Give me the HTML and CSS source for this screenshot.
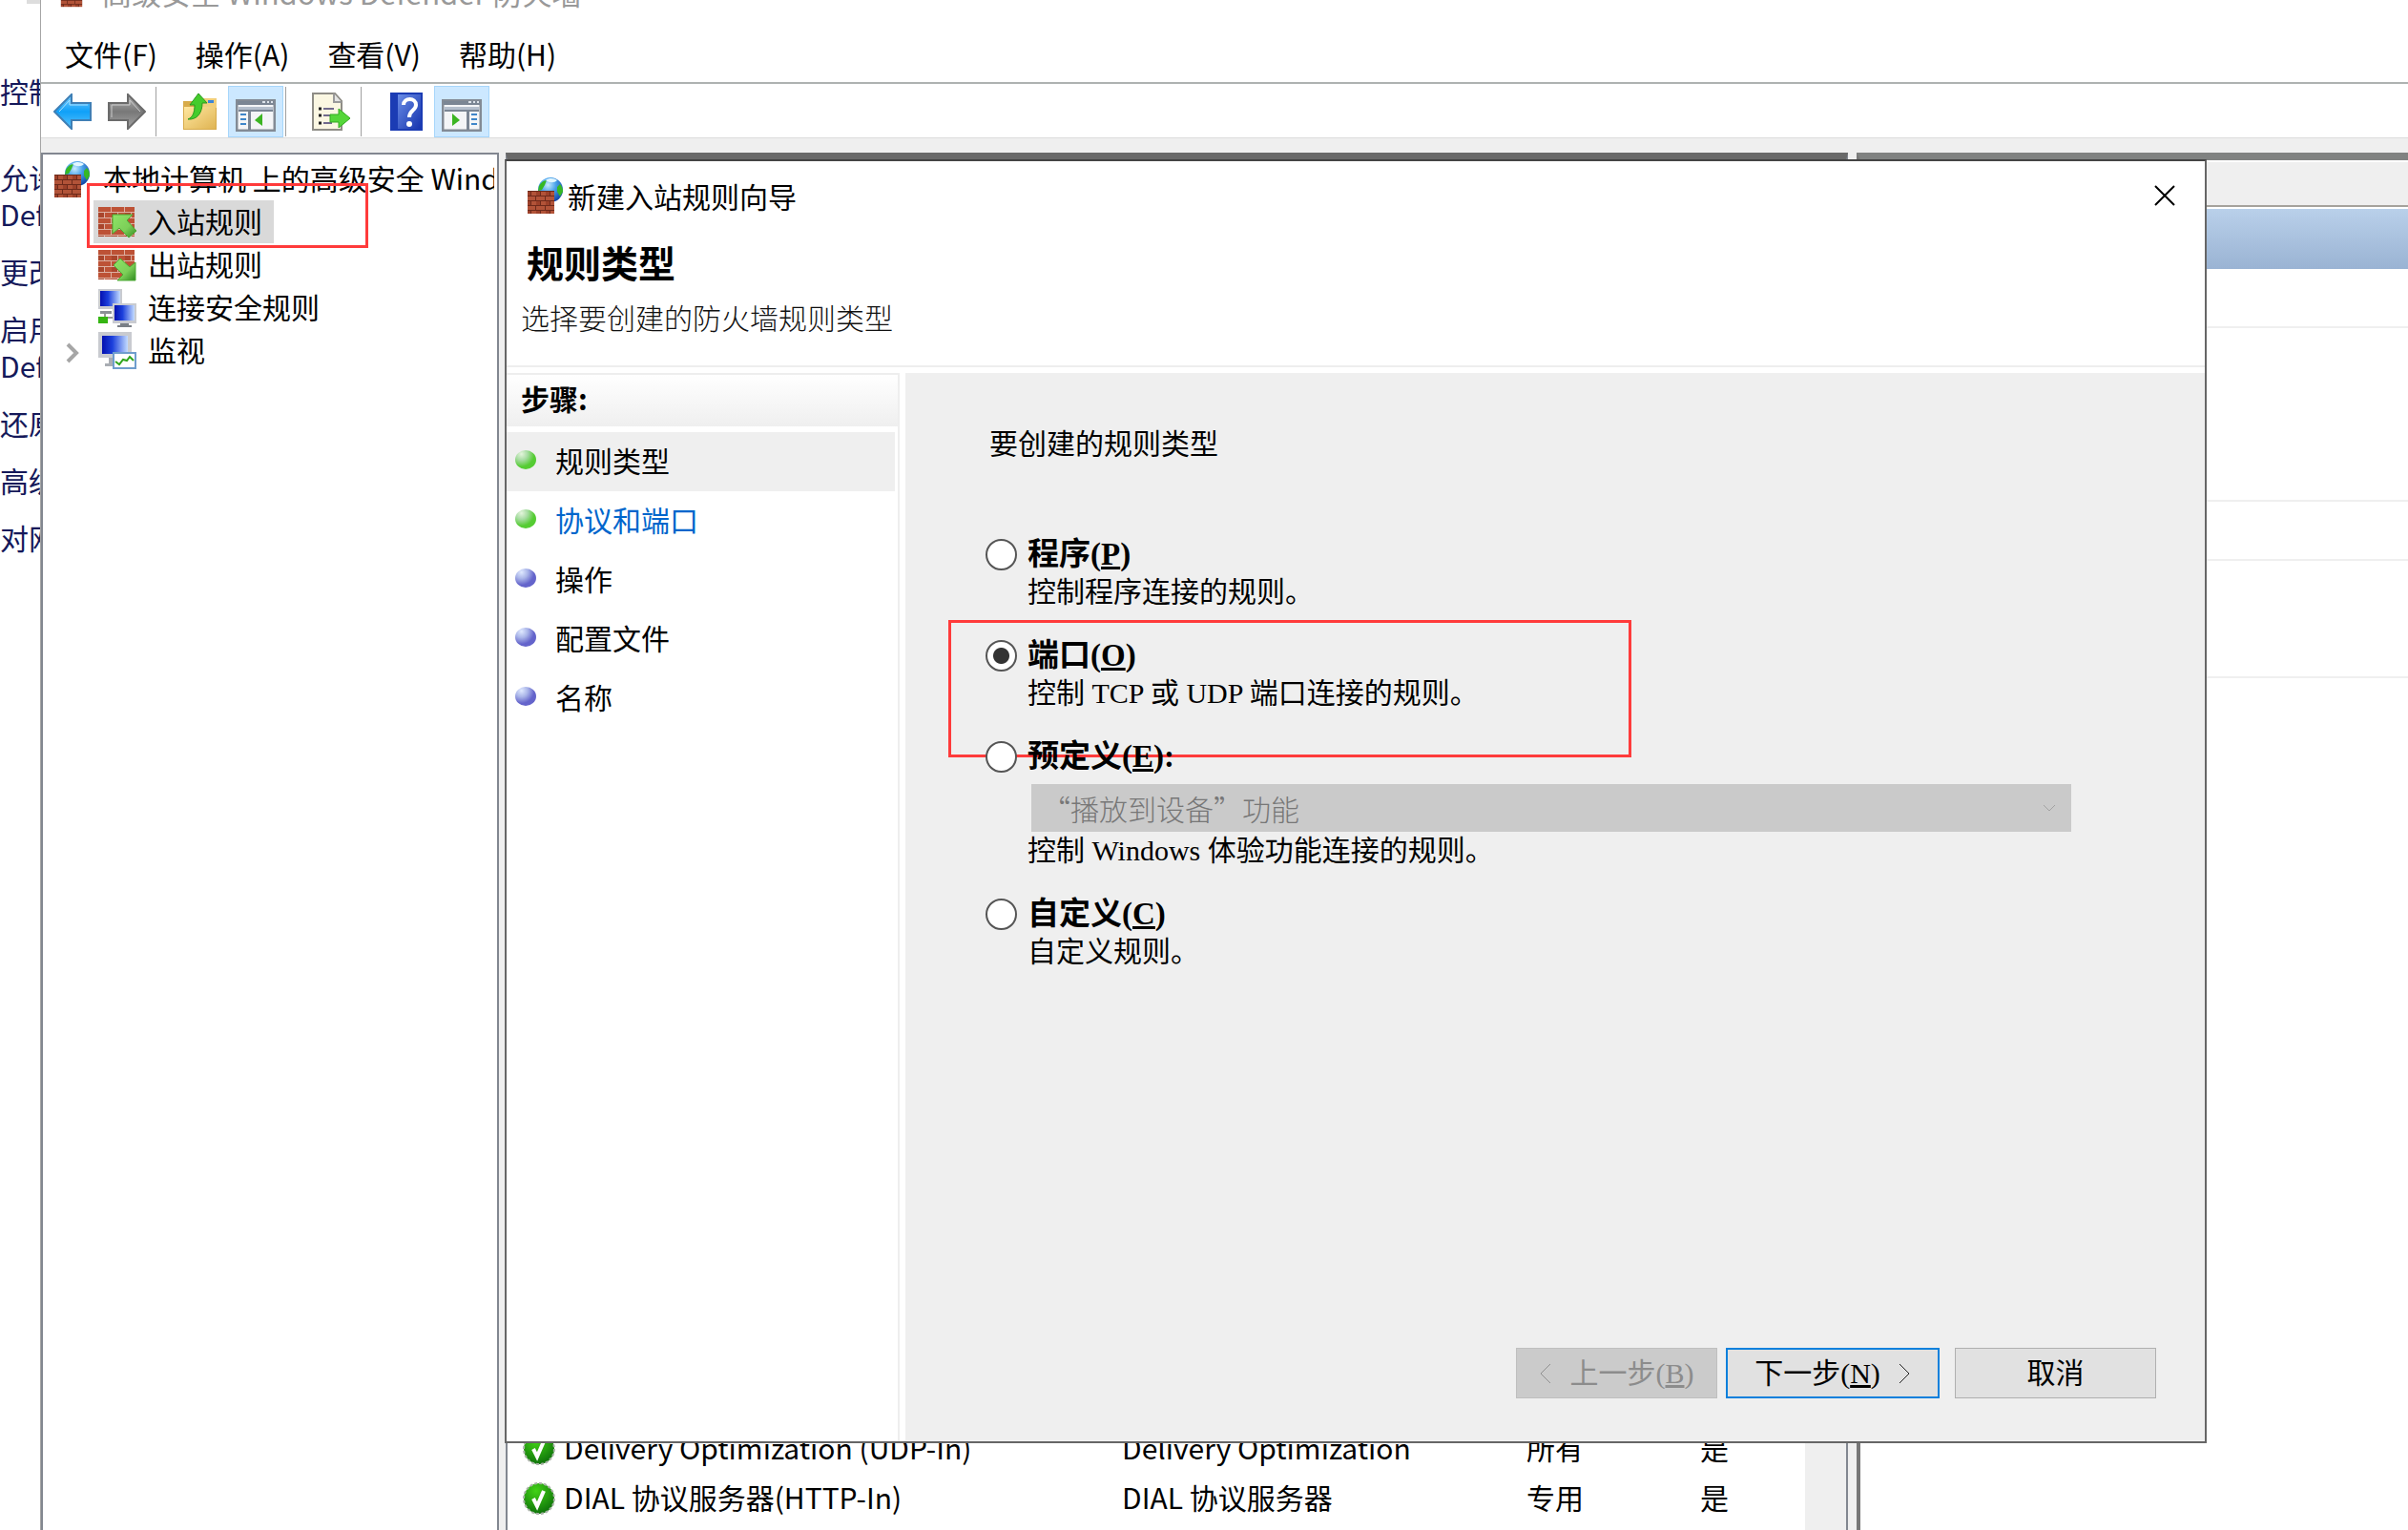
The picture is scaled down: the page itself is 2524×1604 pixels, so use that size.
FILE: index.html
```html
<!DOCTYPE html>
<html lang="zh-CN">
<head>
<meta charset="UTF-8">
<meta name="viewport" content="width=device-width, initial-scale=1.0">
<title>高级安全 Windows Defender 防火墙</title>
<link rel="stylesheet" href="styles.css">
</head>
<body>

<!-- 公用图标 -->
<svg class="defs" width="0" height="0">
  <defs>
    <linearGradient id="blueArrow" x1="0" y1="0" x2="0" y2="1">
      <stop offset="0" stop-color="#7fd0ff"/><stop offset=".5" stop-color="#0fa0f8"/><stop offset="1" stop-color="#5cc4fb"/>
    </linearGradient>
    <linearGradient id="grayArrow" x1="0" y1="0" x2="0" y2="1">
      <stop offset="0" stop-color="#b5b5b5"/><stop offset=".5" stop-color="#787878"/><stop offset="1" stop-color="#a5a5a5"/>
    </linearGradient>
    <linearGradient id="green" x1="0" y1="0" x2="1" y2="1">
      <stop offset="0" stop-color="#8fe468"/><stop offset=".6" stop-color="#7ccf58"/><stop offset="1" stop-color="#2f8a20"/>
    </linearGradient>
    <linearGradient id="screen" x1="0" y1="0" x2="1" y2="0">
      <stop offset="0" stop-color="#0410b0"/><stop offset=".4" stop-color="#1c40dc"/><stop offset="1" stop-color="#c4dcff"/>
    </linearGradient>
    <linearGradient id="folder" x1="0" y1="0" x2="1" y2="1">
      <stop offset="0" stop-color="#ffe7a0"/><stop offset="1" stop-color="#dfb453"/>
    </linearGradient>
    <linearGradient id="help" x1="0" y1="0" x2="1" y2="1">
      <stop offset="0" stop-color="#6a8de6"/><stop offset="1" stop-color="#1634ae"/>
    </linearGradient>
    <radialGradient id="globe" cx=".4" cy=".3" r=".7">
      <stop offset="0" stop-color="#c9ecff"/><stop offset=".45" stop-color="#4aa3ea"/><stop offset="1" stop-color="#1248a8"/>
    </radialGradient>
    <radialGradient id="ok" cx=".4" cy=".25" r=".8">
      <stop offset="0" stop-color="#42d316"/><stop offset="1" stop-color="#0b6d09"/>
    </radialGradient>
    <pattern id="brick" width="14" height="12" patternUnits="userSpaceOnUse">
      <rect width="14" height="12" fill="#dcb0a2"/>
      <rect x="0" y="1" width="13" height="5" fill="#bd5236"/>
      <rect x="0" y="7" width="6" height="5" fill="#a9452c"/>
      <rect x="7" y="7" width="7" height="5" fill="#bd5236"/>
    </pattern>
    <pattern id="brickDark" width="10" height="10" patternUnits="userSpaceOnUse">
      <rect width="10" height="10" fill="#6d2a1b"/>
      <rect x="0" y="1" width="9" height="4" fill="#b25338"/>
      <rect x="0" y="6" width="4" height="4" fill="#9c4029"/>
      <rect x="5" y="6" width="5" height="4" fill="#b25338"/>
    </pattern>
  </defs>
  <symbol id="i-firewall" viewBox="0 0 40 40">
    <circle cx="25" cy="14" r="13" fill="url(#globe)"/>
    <path d="M13 10c2-4 5-6 8-6l-2 5-3 5-4 1zM35 8c2 2 3 5 3 8l-3 5-3-5v-5z" fill="#35b825"/>
    <path d="M20 4c4-3 9-2 12 0-3 3-8 3-12 0z" fill="#e2f6ff"/>
    <rect x="1" y="15" width="28" height="24" fill="url(#brickDark)"/>
  </symbol>
  <symbol id="i-in" viewBox="0 0 40 34">
    <rect x="0" y="1" width="38" height="31" fill="url(#brick)"/>
    <path d="M15 9h21l-6 6 10 11-8 7-10-10-7 6z" fill="url(#green)" stroke="#4dab35"/>
  </symbol>
  <symbol id="i-out" viewBox="0 0 40 34">
    <rect x="0" y="1" width="38" height="31" fill="url(#brick)"/>
    <path d="M16 17l7-7 10 9 6-5v19H20l6-6z" fill="url(#green)" stroke="#4dab35"/>
  </symbol>
  <symbol id="i-conn" viewBox="0 0 40 40">
    <rect x="0" y="0" width="25" height="21" fill="#c9cbd0"/>
    <rect x="2" y="2" width="21" height="16" fill="url(#screen)"/>
    <path d="M2 23h12v3H2z" fill="#8b9097"/>
    <path d="M7 26v4h8" fill="none" stroke="#9a9a9a" stroke-width="2"/>
    <rect x="0" y="29" width="10" height="7" fill="#35b512"/>
    <rect x="15" y="15" width="25" height="21" fill="#c9cbd0"/>
    <rect x="17" y="17" width="21" height="16" fill="url(#screen)"/>
    <path d="M23 36h9v2h3v2H20v-2h3z" fill="#7a7f86"/>
  </symbol>
  <symbol id="i-mon" viewBox="0 0 40 40">
    <rect x="0" y="0" width="35" height="27" fill="#c9cbd0"/>
    <rect x="4" y="4" width="27" height="19" fill="url(#screen)"/>
    <path d="M11 27h9v6h3v3H7v-3h4z" fill="#a9adb3"/>
    <rect x="16" y="22" width="23" height="16" fill="#fff" stroke="#6f9dcd" stroke-width="2"/>
    <path d="M18 31l4 3 4-5 4 1 3-4 4 4" fill="none" stroke="#2fa51c" stroke-width="2"/>
  </symbol>
  <symbol id="i-ok" viewBox="0 0 34 34">
    <circle cx="17" cy="17" r="16" fill="url(#ok)" stroke="#a9b3a7" stroke-width="2" stroke-dasharray="3 2"/>
    <path d="M11 17l4 8 7-16" fill="none" stroke="#fff" stroke-width="4"/>
  </symbol>
</svg>

<!-- 后面的控制面板 -->
<div class="cpanel">
  <div class="corner"></div>
  <a class="home" href="#">控制</a>
  <a href="#">允许<br>Def</a>
  <a href="#">更改</a>
  <a href="#">启用<br>Def</a>
  <a href="#">还原</a>
  <a href="#">高级</a>
  <a href="#">对网</a>
</div>

<!-- 防火墙主窗口 -->
<div class="mmc">
  <div class="mmc-title">
    <svg class="ico-s"><use href="#i-firewall"/></svg>
    <span>高级安全 Windows Defender 防火墙</span>
  </div>
  <div class="menu">
    <button>文件(F)</button>
    <button>操作(A)</button>
    <button>查看(V)</button>
    <button>帮助(H)</button>
  </div>
  <div class="toolbar">
    <button class="tool" aria-label="后退">
      <svg width="40" height="38" viewBox="0 0 40 38"><path d="M1 19L19 1v9h20v18H19v9z" fill="url(#blueArrow)" stroke="#3f7fb5" stroke-width="2"/><path d="M6 19L17 7v5h19" fill="none" stroke="#a9e0ff" stroke-width="1"/></svg>
    </button>
    <button class="tool" aria-label="前进">
      <svg width="40" height="38" viewBox="0 0 40 38"><path d="M39 19L21 1v9H1v18h20v9z" fill="url(#grayArrow)" stroke="#6b6b6b" stroke-width="2"/><path d="M34 19L23 7v5H4v13" fill="none" stroke="#ccc" stroke-width="1"/></svg>
    </button>
    <i class="line"></i>
    <button class="tool tool-up" aria-label="上一级">
      <svg width="40" height="40" viewBox="0 0 40 40"><path d="M2 9h18l3 4h14v26H2z" fill="#d8ab4a"/><path d="M22 6h15v10H22z" fill="#f1cf7c"/><path d="M28 8h6v3h-6z" fill="#3c86d8"/><rect x="3" y="15" width="33" height="23" fill="url(#folder)"/><path d="M7 28c5-2 7-7 7-15H9l9-12 9 10h-5c0 9-4 16-12 17z" fill="#45cc2c" stroke="#2a9a1c"/></svg>
    </button>
    <button class="tool on" aria-label="显示控制台树">
      <svg width="42" height="34" viewBox="0 0 42 34"><rect x="1" y="1" width="40" height="32" fill="#f4f5f7" stroke="#838b95" stroke-width="3"/><path d="M2 2h38v4H2z" fill="#7b8694"/><path d="M28 3h3M33 3h2M37 3h2" stroke="#dde3ea" stroke-width="2"/><path d="M3 8h36v3H3z" fill="#b5bfcd"/><path d="M3 11h36v2H3zM13 13h3v19h-3z" fill="#7b8694"/><path d="M5 16h6M5 21h6M5 26h6" stroke="#3f86c9" stroke-width="2"/><path d="M28 15v13l-8-6z" fill="#3cb522"/></svg>
    </button>
    <i class="line"></i>
    <button class="tool tool-wide" aria-label="导出列表">
      <svg width="42" height="40" viewBox="0 0 42 40"><path d="M2 1h23l7 8v30H2z" fill="#fbf7e2" stroke="#8f8d86" stroke-width="2"/><path d="M24 1v9h8" fill="#e4e4e4" stroke="#9a9a9a" stroke-width="2"/><path d="M13 17h11M13 24h8M13 32h9" stroke="#716a8c" stroke-width="2"/><path d="M8 17h3M8 24h3M8 32h3" stroke="#222" stroke-width="3"/><path d="M20 23h9v-6l12 10-12 10v-6h-9z" fill="#55d63a" stroke="#33ab20"/></svg>
    </button>
    <i class="line"></i>
    <button class="tool tool-wide" aria-label="帮助">
      <svg width="34" height="40" viewBox="0 0 34 40"><rect width="34" height="40" fill="#1b3cb4"/><rect x="8" y="2" width="24" height="36" fill="url(#help)"/><path d="M14 13c0-8 13-8 13 0 0 6-7 5-7 13" fill="none" stroke="#fff" stroke-width="4"/><circle cx="20" cy="33" r="3" fill="#fff"/></svg>
    </button>
    <button class="tool on" aria-label="显示操作窗格">
      <svg width="42" height="34" viewBox="0 0 42 34"><rect x="1" y="1" width="40" height="32" fill="#f4f5f7" stroke="#838b95" stroke-width="3"/><path d="M2 2h38v4H2z" fill="#7b8694"/><path d="M28 3h3M33 3h2M37 3h2" stroke="#dde3ea" stroke-width="2"/><path d="M3 8h36v3H3z" fill="#b5bfcd"/><path d="M3 11h36v2H3zM26 13h3v19h-3z" fill="#7b8694"/><path d="M31 16h6M31 21h6M31 26h6" stroke="#3f86c9" stroke-width="2"/><path d="M11 15v13l8-6z" fill="#3cb522"/></svg>
    </button>
  </div>

  <div class="panes">
    <div class="tree">
      <ul>
        <li class="root"><svg class="ico"><use href="#i-firewall"/></svg><span>本地计算机 上的高级安全 Wind</span></li>
        <li><div class="node active"><svg class="ico"><use href="#i-in"/></svg><span>入站规则</span></div></li>
        <li><div class="node"><svg class="ico"><use href="#i-out"/></svg><span>出站规则</span></div></li>
        <li><div class="node"><svg class="ico"><use href="#i-conn"/></svg><span>连接安全规则</span></div></li>
        <li>
          <svg class="arrow" width="14" height="22" viewBox="0 0 14 22"><path d="M2 2l9 9-9 9" fill="none" stroke="#a6a6a6" stroke-width="4"/></svg>
          <div class="node"><svg class="ico"><use href="#i-mon"/></svg><span>监视</span></div>
        </li>
      </ul>
      <div class="mark mark-tree"></div>
    </div>

    <div class="rules">
      <table>
        <tr>
          <td class="c-name"><svg class="ico-ok"><use href="#i-ok"/></svg>Delivery Optimization (UDP-In)</td>
          <td class="c-group">Delivery Optimization</td>
          <td class="c-file">所有</td>
          <td>是</td>
        </tr>
        <tr>
          <td class="c-name"><svg class="ico-ok"><use href="#i-ok"/></svg>DIAL 协议服务器(HTTP-In)</td>
          <td class="c-group">DIAL 协议服务器</td>
          <td class="c-file">专用</td>
          <td>是</td>
        </tr>
      </table>
      <div class="scroll"></div>
    </div>

    <div class="actions">
      <div class="act-head"></div>
      <div class="act-bar"></div>
      <div class="act-a"></div>
      <div class="act-b"></div>
      <div class="act-c"></div>
      <div class="act-d"></div>
    </div>
  </div>
</div>

<!-- 新建规则向导 -->
<div class="dialog">
  <div class="dlg-title">
    <svg class="ico"><use href="#i-firewall"/></svg>
    <span>新建入站规则向导</span>
    <button class="close" aria-label="关闭">
      <svg width="22" height="22" viewBox="0 0 22 22"><path d="M1 1l20 20M21 1L1 21" stroke="#000" stroke-width="2"/></svg>
    </button>
  </div>
  <div class="dlg-head">
    <h1>规则类型</h1>
    <p>选择要创建的防火墙规则类型</p>
  </div>
  <div class="dlg-body">
    <div class="steps">
      <h2>步骤:</h2>
      <ul>
        <li class="active done">规则类型</li>
        <li class="done"><a href="#">协议和端口</a></li>
        <li>操作</li>
        <li>配置文件</li>
        <li>名称</li>
      </ul>
    </div>
    <form class="content">
      <p class="intro">要创建的规则类型</p>

      <div class="option">
        <input type="radio" name="type" id="t1">
        <label for="t1">程序(<u>P</u>)</label>
        <p>控制程序连接的规则。</p>
      </div>
      <div class="option">
        <input type="radio" name="type" id="t2" checked>
        <label for="t2">端口(<u>O</u>)</label>
        <p>控制 TCP 或 UDP 端口连接的规则。</p>
        <div class="mark mark-port"></div>
      </div>
      <div class="option">
        <input type="radio" name="type" id="t3">
        <label for="t3">预定义(<u>E</u>):</label>
        <div class="combo">
          <select aria-label="预定义" disabled>
            <option>“播放到设备”功能</option>
          </select>
          <svg width="14" height="10" viewBox="0 0 14 10"><path d="M1 2l6 6 6-6" fill="none" stroke="#a2a2a2" stroke-width="1"/></svg>
        </div>
        <p>控制 Windows 体验功能连接的规则。</p>
      </div>
      <div class="option">
        <input type="radio" name="type" id="t4">
        <label for="t4">自定义(<u>C</u>)</label>
        <p>自定义规则。</p>
      </div>

      <div class="btns">
        <button type="button" class="btn" disabled>
          <svg width="14" height="22" viewBox="0 0 14 22"><path d="M12 1L2 11l10 10" fill="none" stroke="#909090" stroke-width="1"/></svg>
          <span>上一步(<u>B</u>)</span>
        </button>
        <button type="button" class="btn next">
          <span>下一步(<u>N</u>)</span>
          <svg width="14" height="22" viewBox="0 0 14 22"><path d="M2 1l10 10L2 21" fill="none" stroke="#222" stroke-width="1"/></svg>
        </button>
        <button type="button" class="btn">取消</button>
      </div>
    </form>
  </div>
</div>

</body>
</html>
```
FILE: styles.css
```css
*{
  margin: 0;
  padding: 0;
  box-sizing: border-box;
  list-style: none;
}
body{
  height: 100vh;
  position: relative;
  overflow: hidden;
  background: #fff;
  color: #000;
  font-family: "Noto Sans CJK SC", sans-serif;
  font-size: 30px;
  line-height: 40px;
  white-space: nowrap;
}
button, select{
  font: inherit;
  color: inherit;
  background: none;
  border: none;
}
svg{
  flex: none;
}
.defs{
  position: absolute;
}
.ico{
  width: 40px;
  height: 40px;
}
.ico-s{
  width: 32px;
  height: 36px;
}

/* 控制面板 */
.cpanel{
  width: 42px;
  overflow: hidden;
}
.cpanel a{
  display: block;
  margin-bottom: 21px;
  line-height: 39px;
  color: #15195a;
  text-decoration: none;
}
.cpanel .home{
  margin: 72px 0 51px;
}
.corner{
  height: 4px;
  margin-left: 28px;
  background: #ddd;
}

/* 主窗口 */
.mmc{
  position: absolute;
  left: 42px;
  right: 0;
  top: -46px;
  bottom: 0;
  display: flex;
  flex-direction: column;
  background: #fff;
  border-left: 1px solid #a5a5a5;
}
.mmc-title{
  height: 76px;
  padding-left: 20px;
  display: flex;
  align-items: center;
  gap: 12px;
  color: #999;
  font-size: 31px;
}
.menu{
  height: 56px;
  padding: 0 0 4px 25px;
  display: flex;
  align-items: center;
  gap: 40px;
}
.toolbar{
  height: 59px;
  padding: 2px 0 0 4px;
  display: flex;
  align-items: center;
  border-top: 2px solid #aeb2b1;
  border-bottom: 1px solid #ddd;
}
.tool{
  width: 57px;
  height: 54px;
  display: flex;
  align-items: center;
  justify-content: center;
}
.tool.on{
  width: 58px;
  background: #cce8ff;
  border: 1px solid #a6d6fb;
}
.tool.on svg{
  margin-top: 8px;
}
.tool-up{
  width: 74px;
  padding-left: 16px;
}
.tool-wide{
  width: 75px;
  padding-left: 16px;
}
.line{
  width: 1px;
  height: 52px;
  margin: 0 1px 0 2px;
  background: #a0a0a0;
}
.panes{
  flex: 1;
  padding-top: 15px;
  display: flex;
  background: #efefef;
}

/* 左侧树 */
.tree{
  width: 480px;
  padding: 3px;
  position: relative;
  background: #fff;
  border: 2px solid #828790;
  border-bottom: none;
}
.tree ul{
  overflow: hidden;
}
.tree li{
  height: 45px;
  padding-left: 50px;
  display: flex;
  align-items: center;
  position: relative;
}
.tree .root{
  padding-left: 8px;
  gap: 12px;
}
.tree span{
  padding-bottom: 4px;
}
.node{
  height: 45px;
  padding: 0 12px 0 5px;
  display: flex;
  align-items: center;
  gap: 12px;
}
.node.active{
  background: #d9d9d9;
}
.arrow{
  position: absolute;
  left: 21px;
  top: 14px;
}

/* 红框标记 */
.mark{
  position: absolute;
  border: 3px solid #ff3b3b;
}
.mark-tree{
  left: 46px;
  top: 30px;
  width: 295px;
  height: 68px;
}
.mark-port{
  left: -39px;
  top: -17px;
  width: 716px;
  height: 144px;
}

/* 规则列表 */
.rules{
  flex: 1;
  margin: 0 9px 0 7px;
  display: flex;
  align-items: flex-end;
  background: #fff;
  border: 2px solid #828790;
  border-top: 8px solid #696969;
  border-bottom: none;
}
.rules table{
  flex: 1;
  margin-bottom: 9px;
  border-collapse: collapse;
  table-layout: fixed;
}
.rules td{
  height: 52px;
}
.c-name{
  width: 644px;
  padding-left: 16px;
}
.c-group{
  width: 424px;
}
.c-file{
  width: 182px;
}
.ico-ok{
  width: 34px;
  height: 34px;
  margin-right: 9px;
  vertical-align: -6px;
}
.scroll{
  width: 43px;
  align-self: stretch;
  background: #efefef;
}

/* 操作窗格 */
.actions{
  width: 578px;
  background: #fff;
  border-top: 8px solid #808281;
  border-left: 4px solid #777;
}
.act-head{
  height: 49px;
  background: #efefef;
  border-top: 2px solid #fff;
  border-bottom: 2px solid #a5a29c;
}
.act-bar{
  height: 63px;
  margin-top: 2px;
  background: linear-gradient(#b9d0ea, #9ab3d3);
}
.act-a, .act-b, .act-c, .act-d{
  border-bottom: 2px solid #efefef;
}
.act-a{
  height: 62px;
}
.act-b{
  height: 182px;
}
.act-c{
  height: 62px;
}
.act-d{
  height: 123px;
}

/* 向导 */
.dialog{
  position: absolute;
  left: 529px;
  right: 211px;
  top: 167px;
  bottom: 91px;
  display: flex;
  flex-direction: column;
  background: #fff;
  border: 2px solid #666;
  border-top-color: #444;
}
.dlg-title{
  height: 71px;
  padding: 0 31px 0 21px;
  display: flex;
  align-items: center;
  gap: 3px;
}
.close{
  margin-left: auto;
  display: flex;
}
.dlg-head{
  padding: 4px 15px 31px;
  border-bottom: 2px solid #eee;
}
.dlg-head h1{
  padding-left: 6px;
  font-size: 39px;
  line-height: 60px;
}
.dlg-head p{
  margin-top: 8px;
  color: #111;
  font-weight: 300;
}
.dlg-body{
  flex: 1;
  margin-top: 6px;
  display: flex;
  gap: 6px;
}
.steps{
  width: 412px;
  border-right: 2px solid #eee;
}
.steps h2{
  margin-bottom: 6px;
  padding: 0 0 6px 15px;
  font-size: 30px;
  line-height: 48px;
  border-top: 2px solid #eee;
  background: linear-gradient(#fff, #efefef);
}
.steps li{
  height: 62px;
  margin-right: 3px;
  padding: 0 0 4px 9px;
  display: flex;
  align-items: center;
  gap: 20px;
}
.steps li::before{
  content: "";
  width: 22px;
  height: 20px;
  border-radius: 50%;
  background: radial-gradient(circle at 30% 20%, #dfe9ff, #a9b4e8 30%, #6464cb 60%);
}
.steps li.done::before{
  background: radial-gradient(circle at 30% 20%, #e4f5dc, #a5dba0 30%, #55cc33 60%);
}
.steps li.active{
  background: #efefef;
}
.steps a{
  color: #0066cc;
  text-decoration: none;
}
.content{
  flex: 1;
  padding: 55px 51px 45px 84px;
  display: flex;
  flex-direction: column;
  background: #efefef;
  font-family: "Liberation Serif", "Noto Sans CJK SC", serif;
}
.intro{
  margin-bottom: 75px;
  padding-left: 4px;
}
.option{
  margin-bottom: 26px;
  display: grid;
  grid-template-columns: 33px 1fr;
  column-gap: 11px;
  align-items: center;
  position: relative;
}
.option label{
  font-size: 33px;
  font-weight: bold;
}
.option p, .combo{
  grid-column: 2;
}
.option input{
  appearance: none;
  width: 33px;
  height: 33px;
  border: 2px solid #555;
  border-radius: 50%;
  background: #fff;
}
.option input:checked{
  background: radial-gradient(circle, #333 8px, #fff 9px);
}
.combo{
  margin: 9px 89px 0 4px;
  position: relative;
}
.combo select{
  display: block;
  appearance: none;
  width: 100%;
  height: 50px;
  padding-left: 11px;
  background: #cacaca;
  color: #777;
  font-family: "Noto Sans CJK SC", sans-serif;
  font-weight: 300;
  opacity: 1;
}
.combo svg{
  position: absolute;
  right: 16px;
  top: 20px;
}
.btns{
  margin-top: auto;
  display: flex;
  justify-content: flex-end;
}
.btn{
  width: 211px;
  height: 53px;
  margin-left: 16px;
  display: flex;
  align-items: center;
  justify-content: center;
  gap: 18px;
  background: #e1e1e1;
  border: 1px solid #b0b0b0;
}
.btn:disabled{
  background: #cbcbcb;
  border-color: #bfbfbf;
  color: #8c8c8c;
}
.btn.next{
  width: 224px;
  margin-left: 9px;
  border: 2px solid #0a80dc;
}
```
